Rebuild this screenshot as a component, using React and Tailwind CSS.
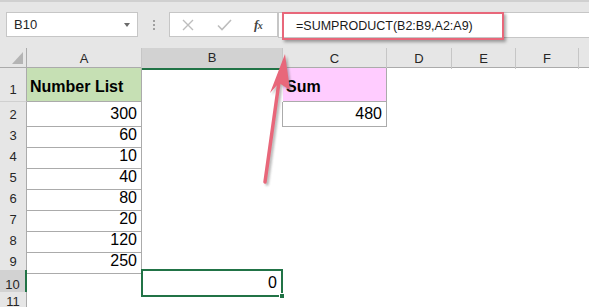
import React from "react";

const cols = "grid grid-cols-[27px_115px_141px_104px_65px_64px_63px_1fr]";

const numbers = [300, 60, 10, 40, 80, 20, 120, 250];

function RowHead({ n, selected }) {
  return (
    <div
      className={`flex items-end justify-center pb-[2px] text-[13px] text-[#262626] border-b border-[#d0d0d0] ${
        selected
          ? "bg-[#d2d2d2] border-r-2 border-r-[#217346]"
          : "bg-[#e6e6e6] border-r border-r-[#ababab]"
      }`}
    >
      {n}
    </div>
  );
}

function Arrow() {
  return (
    <svg
      className="absolute left-0 top-0 pointer-events-none"
      width="589"
      height="307"
      viewBox="0 0 589 307"
    >
      <defs>
        <filter id="blur" x="-50%" y="-50%" width="200%" height="200%">
          <feGaussianBlur stdDeviation="1.2" />
        </filter>
      </defs>
      {/* shadow */}
      <g transform="translate(2 2)" filter="url(#blur)" opacity="0.45">
        <line x1="265" y1="182" x2="279" y2="82" stroke="#666" strokeWidth="3.5" strokeLinecap="round" />
        <polygon points="285,54 290,90 279,83 270,93" fill="#666" />
      </g>
      <line x1="265" y1="182" x2="279" y2="82" stroke="#e8677a" strokeWidth="3.5" strokeLinecap="round" />
      <polygon points="285,54 290,90 279,83 270,93" fill="#e8677a" />
    </svg>
  );
}

export default function App() {
  return (
    <div className="relative w-[589px] h-[307px] overflow-hidden bg-white font-['Liberation_Sans',Arial,sans-serif] text-black">
      {/* toolbar */}
      <div className="h-[48px] bg-[#e6e6e6] border-t-2 border-[#d0d0d0] flex items-start pt-[10px]">
        <div className="ml-[6px] w-[132px] h-[25px] bg-white border border-[#c6c6c6] flex items-center justify-between pl-[7px] pr-[7px]">
          <span className="text-[13px] text-[#262626]">B10</span>
          <span className="w-0 h-0 border-l-[3.5px] border-r-[3.5px] border-t-[4px] border-l-transparent border-r-transparent border-t-[#6b6b6b]" />
        </div>
        <div className="w-[31px] h-[25px] flex flex-col items-center justify-center gap-[2px]">
          <span className="w-[2px] h-[2px] bg-[#a0a0a0]" />
          <span className="w-[2px] h-[2px] bg-[#a0a0a0]" />
          <span className="w-[2px] h-[2px] bg-[#a0a0a0]" />
        </div>
        <div className="w-[109px] h-[25px] bg-white border border-[#c6c6c6] flex items-center">
          <svg className="ml-[12px]" width="12" height="12" viewBox="0 0 12 12">
            <path d="M1 1 L11 11 M11 1 L1 11" stroke="#bdbdbd" strokeWidth="1.4" />
          </svg>
          <svg className="ml-[23px]" width="15" height="12" viewBox="0 0 15 12">
            <path d="M1 6.5 L5 10.5 L14 1" stroke="#bdbdbd" strokeWidth="1.6" fill="none" />
          </svg>
          <span className="ml-[22px] text-[13px] italic font-['Liberation_Serif',serif] text-[#444] font-bold tracking-[-0.5px]">
            f<span className="text-[10px]">x</span>
          </span>
        </div>
        <div className="flex-1 h-[26px] bg-white border-y border-l border-[#c6c6c6] flex items-center pl-[17px] pt-[3px]">
          <span className="text-[12.5px] text-[#1a1a1a]">=SUMPRODUCT(B2:B9,A2:A9)</span>
        </div>
      </div>

      {/* column header */}
      <div className={`${cols} h-[20px] bg-[#e6e6e6] border-b border-[#ababab] text-[13px] text-[#262626]`}>
        <div className="relative border-r border-[#ababab]">
          <svg className="absolute left-[12px] top-[4px]" width="11" height="12" viewBox="0 0 11 12">
            <polygon points="11,0 11,12 0,12" fill="#b4b4b4" />
          </svg>
        </div>
        <div className="flex items-center justify-center border-r border-[#c6c6c6]">A</div>
        <div className="flex items-center justify-center bg-[#d2d2d2] border-r border-[#c6c6c6] border-b-2 border-b-[#217346] -mb-px">B</div>
        <div className="flex items-center justify-center border-r border-[#c6c6c6]">C</div>
        <div className="flex items-center justify-center border-r border-[#c6c6c6]">D</div>
        <div className="flex items-center justify-center border-r border-[#c6c6c6]">E</div>
        <div className="flex items-center justify-center border-r border-[#c6c6c6]">F</div>
        <div />
      </div>

      {/* row 1 */}
      <div className={`${cols} h-[34px] text-[16px]`}>
        <RowHead n={1} />
        <div className="bg-[#c6e0b4] border-r border-b border-[#ababab] flex items-end pl-[3px] pb-[2px] font-bold">
          Number List
        </div>
        <div />
        <div className="bg-[#ffccff] border-r border-b border-[#ababab] flex items-end pl-[3px] pb-[2px] font-bold">
          Sum
        </div>
        <div />
        <div />
        <div />
        <div />
      </div>

      {/* rows 2-9 */}
      {numbers.map((v, i) => (
        <div key={i} className={`${cols} h-[21px] text-[16px]`}>
          <RowHead n={i + 2} />
          <div className="border-r border-b border-[#ababab] flex items-center justify-end pr-[4px]">{v}</div>
          <div />
          {i === 0 ? (
            <div className="border-l border-r border-b border-[#ababab] -ml-px flex items-center justify-end pr-[4px]">480</div>
          ) : (
            <div />
          )}
          <div />
          <div />
          <div />
          <div />
        </div>
      ))}

      {/* row 10 */}
      <div className={`${cols} h-[22px] text-[16px]`}>
        <RowHead n={10} selected />
        <div />
        <div className="relative -ml-px -mt-px border-2 border-[#217346] flex items-center justify-end pr-[4px]">
          0
          <span className="absolute -right-[4px] -bottom-[4px] w-[6px] h-[6px] bg-[#217346] border border-white" />
        </div>
        <div />
        <div />
        <div />
        <div />
        <div />
      </div>

      {/* row 11 */}
      <div className={`${cols} h-[21px] text-[16px]`}>
        <RowHead n={11} />
        <div />
        <div />
        <div />
        <div />
        <div />
        <div />
        <div />
      </div>

      {/* annotation */}
      <div className="absolute left-[282px] top-[12px] w-[222px] h-[28px] border-2 border-[#e8677a] shadow-[2px_2px_3px_rgba(0,0,0,0.35)] pointer-events-none" />
      <Arrow />
    </div>
  );
}
